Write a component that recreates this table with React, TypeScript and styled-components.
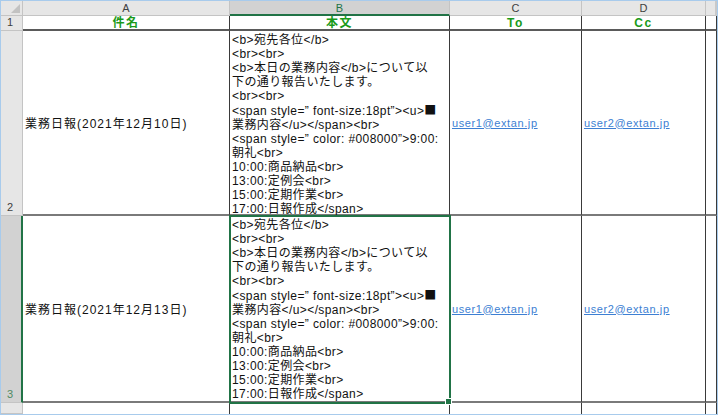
import React from "react";
import styled, { createGlobalStyle } from "styled-components";

const Global = createGlobalStyle`
  html, body { margin: 0; padding: 0; background: #ffffff; }
  body { width: 718px; height: 415px; overflow: hidden; }
`;

const GREEN = "#217346";
const CELL_FONT = `"Liberation Sans", "Noto Sans CJK JP", sans-serif`;

const Sheet = styled.div`
  box-sizing: border-box;
  width: 718px;
  height: 415px;
  border: 1px solid #a8cbec;
  display: grid;
  grid-template-columns: 22px 207px 220px 132px 124px 1fr;
  grid-template-rows: 15px 15px 185px 187px 1fr;
  background: #ffffff;
  overflow: hidden;
`;

const Corner = styled.div`
  position: relative;
  box-sizing: border-box;
  background: #e6e6e6;
  border-right: 1px solid #c4c4c4;
  border-bottom: 1px solid #c4c4c4;
  &::after {
    content: "";
    position: absolute;
    right: 2px;
    bottom: 2px;
    width: 0;
    height: 0;
    border-left: 9px solid transparent;
    border-bottom: 9px solid #c2c2c2;
  }
`;

const ColHeader = styled.div<{ $selected?: boolean; $last?: boolean }>`
  box-sizing: border-box;
  background: ${(p) => (p.$selected ? "#d2d2d2" : "#e6e6e6")};
  color: ${(p) => (p.$selected ? GREEN : "#404040")};
  border-right: ${(p) => (p.$last ? "2px solid #c9c9c9" : "1px solid #c4c4c4")};
  border-bottom: ${(p) => (p.$selected ? `2px solid ${GREEN}` : "1px solid #c4c4c4")};
  font: 11px/15px "Liberation Sans", Arial, sans-serif;
  text-align: center;
`;

const RowHeader = styled.div<{ $selected?: boolean }>`
  box-sizing: border-box;
  display: flex;
  align-items: flex-end;
  padding: 0 0 1px 6px;
  background: ${(p) => (p.$selected ? "#d2d2d2" : "#e6e6e6")};
  color: ${(p) => (p.$selected ? "#4f8a63" : "#404040")};
  border-right: ${(p) => (p.$selected ? `2px solid ${GREEN}` : "1px solid #c4c4c4")};
  border-bottom: 1px solid #c4c4c4;
  font: 11px/13px "Liberation Sans", Arial, sans-serif;
`;

const Cell = styled.div<{ $noBottom?: boolean }>`
  box-sizing: border-box;
  position: relative;
  border-right: 1px solid #3a3a3a;
  border-bottom: ${(p) => (p.$noBottom ? "none" : "2px solid #7a7a7a")};
  font-family: ${CELL_FONT};
  font-size: 12px;
  color: #111;
  min-width: 0;
`;

const TitleCell = styled(Cell)`
  border-bottom: 2px solid #5a5a5a;
  color: #1a9a1a;
  font-weight: bold;
  font-size: 12px;
  line-height: 14px;
  letter-spacing: 1.5px;
  text-align: center;
`;

const MiddleCell = styled(Cell)`
  display: flex;
  align-items: center;
  padding-left: 2px;
  white-space: nowrap;
  letter-spacing: 1px;
`;

const BodyCell = styled(Cell)<{ $selected?: boolean }>`
  padding: 2px 0 0 2px;
  line-height: 14px;
  ${(p) =>
    p.$selected
      ? `
    outline: 2px solid ${GREEN};
    outline-offset: -1px;
    z-index: 1;
  `
      : ""}
`;

const FillHandle = styled.span`
  position: absolute;
  right: -3px;
  bottom: -4px;
  width: 5px;
  height: 5px;
  background: ${GREEN};
  border: 1px solid #ffffff;
  z-index: 2;
`;

const Line = styled.div`
  white-space: nowrap;
  letter-spacing: 0.4px;
`;

const Square = styled.span`
  font-family: "Noto Sans CJK JP", sans-serif;
  font-size: 12px;
  letter-spacing: 0;
`;

const MailLink = styled.a`
  color: #3d7fd3;
  text-decoration: underline;
  font-size: 11px;
  letter-spacing: 0.6px;
`;

const bodyLines: React.ReactNode[] = [
  "<b>宛先各位</b>",
  "<br><br>",
  "<b>本日の業務内容</b>について以",
  "下の通り報告いたします。",
  "<br><br>",
  <>
    {"<span style=\u201D font-size:18pt\u201D><u>"}
    <Square>■</Square>
  </>,
  "業務内容</u></span><br>",
  "<span style=\u201D color: #008000\u201D>9:00:",
  "朝礼<br>",
  "10:00:商品納品<br>",
  "13:00:定例会<br>",
  "15:00:定期作業<br>",
  "17:00:日報作成</span>",
];

const rows = [
  { n: "2", title: "業務日報(2021年12月10日)", selected: false },
  { n: "3", title: "業務日報(2021年12月13日)", selected: true },
];

export default function App() {
  return (
    <>
      <Global />
      <Sheet>
        <Corner />
        <ColHeader>A</ColHeader>
        <ColHeader $selected>B</ColHeader>
        <ColHeader>C</ColHeader>
        <ColHeader>D</ColHeader>
        <ColHeader $last />

        <RowHeader>1</RowHeader>
        <TitleCell>件名</TitleCell>
        <TitleCell>本文</TitleCell>
        <TitleCell>To</TitleCell>
        <TitleCell>Cc</TitleCell>
        <TitleCell />

        {rows.map((r) => (
          <React.Fragment key={r.n}>
            <RowHeader $selected={r.selected}>{r.n}</RowHeader>
            <MiddleCell>{r.title}</MiddleCell>
            <BodyCell $selected={r.selected}>
              {bodyLines.map((l, i) => (
                <Line key={i}>{l}</Line>
              ))}
              {r.selected && <FillHandle />}
            </BodyCell>
            <MiddleCell>
              <MailLink href="#">user1@extan.jp</MailLink>
            </MiddleCell>
            <MiddleCell>
              <MailLink href="#">user2@extan.jp</MailLink>
            </MiddleCell>
            <Cell />
          </React.Fragment>
        ))}

        <RowHeader />
        <Cell $noBottom />
        <Cell $noBottom />
        <Cell $noBottom />
        <Cell $noBottom />
        <Cell $noBottom />
      </Sheet>
    </>
  );
}
